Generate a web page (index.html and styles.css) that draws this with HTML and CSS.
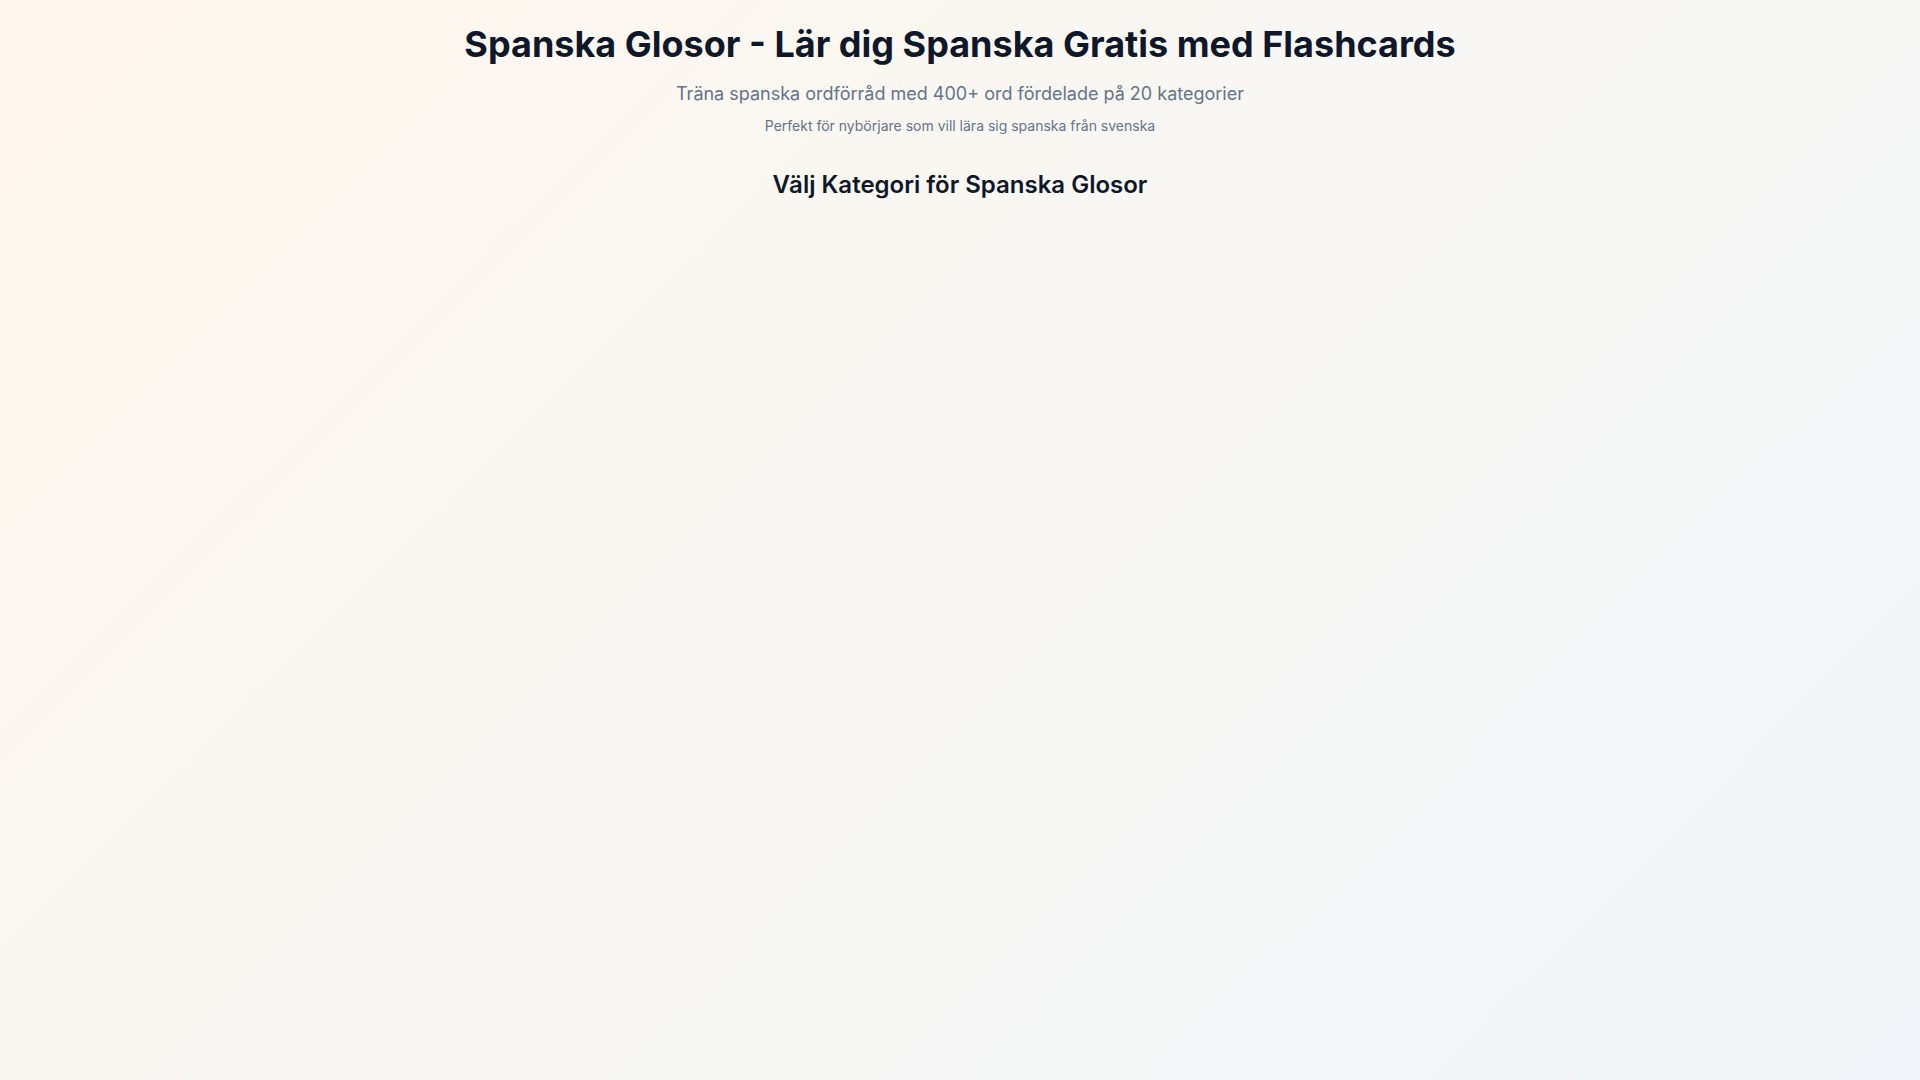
FILE: index.html
```html
<!DOCTYPE html>
<html lang="sv">
<head>
<meta charset="utf-8">
<title>Spanska Glosor</title>
<link rel="stylesheet" href="styles.css">
</head>
<body>
<main class="page">
  <header class="hero">
    <h1 class="title">Spanska Glosor - Lär dig Spanska Gratis med Flashcards</h1>
    <p class="subtitle">Träna spanska ordförråd med 400+ ord fördelade på 20 kategorier</p>
    <p class="note">Perfekt för nybörjare som vill lära sig spanska från svenska</p>
  </header>
  <section class="categories">
    <h2 class="section-title">Välj Kategori för Spanska Glosor</h2>
  </section>
</main>
</body>
</html>
```

FILE: styles.css
```css
html, body {
  margin: 0;
  padding: 0;
  height: 100%;
}
body {
  font-family: Inter, "Noto Sans", sans-serif;
  background: linear-gradient(135deg, #fff7ed 0%, #f8f7f4 50%, #f1f5f9 100%);
  color: #0f172a;
  min-height: 100vh;
}
.page {
  max-width: 1200px;
  margin: 0 auto;
  padding: 24px 16px;
  text-align: center;
}
.hero {
  margin-bottom: 33px;
}
.title {
  font-size: 36px;
  line-height: 40px;
  font-weight: 700;
  margin: 0 0 16px;
  color: #0f172a;
}
.subtitle {
  font-size: 18px;
  line-height: 28px;
  color: #64748b;
  margin: 0 0 8px;
}
.note {
  font-size: 14px;
  line-height: 20px;
  color: #64748b;
  margin: 0;
}
.section-title {
  font-size: 24px;
  line-height: 32px;
  font-weight: 600;
  margin: 0;
  color: #0f172a;
}
```
